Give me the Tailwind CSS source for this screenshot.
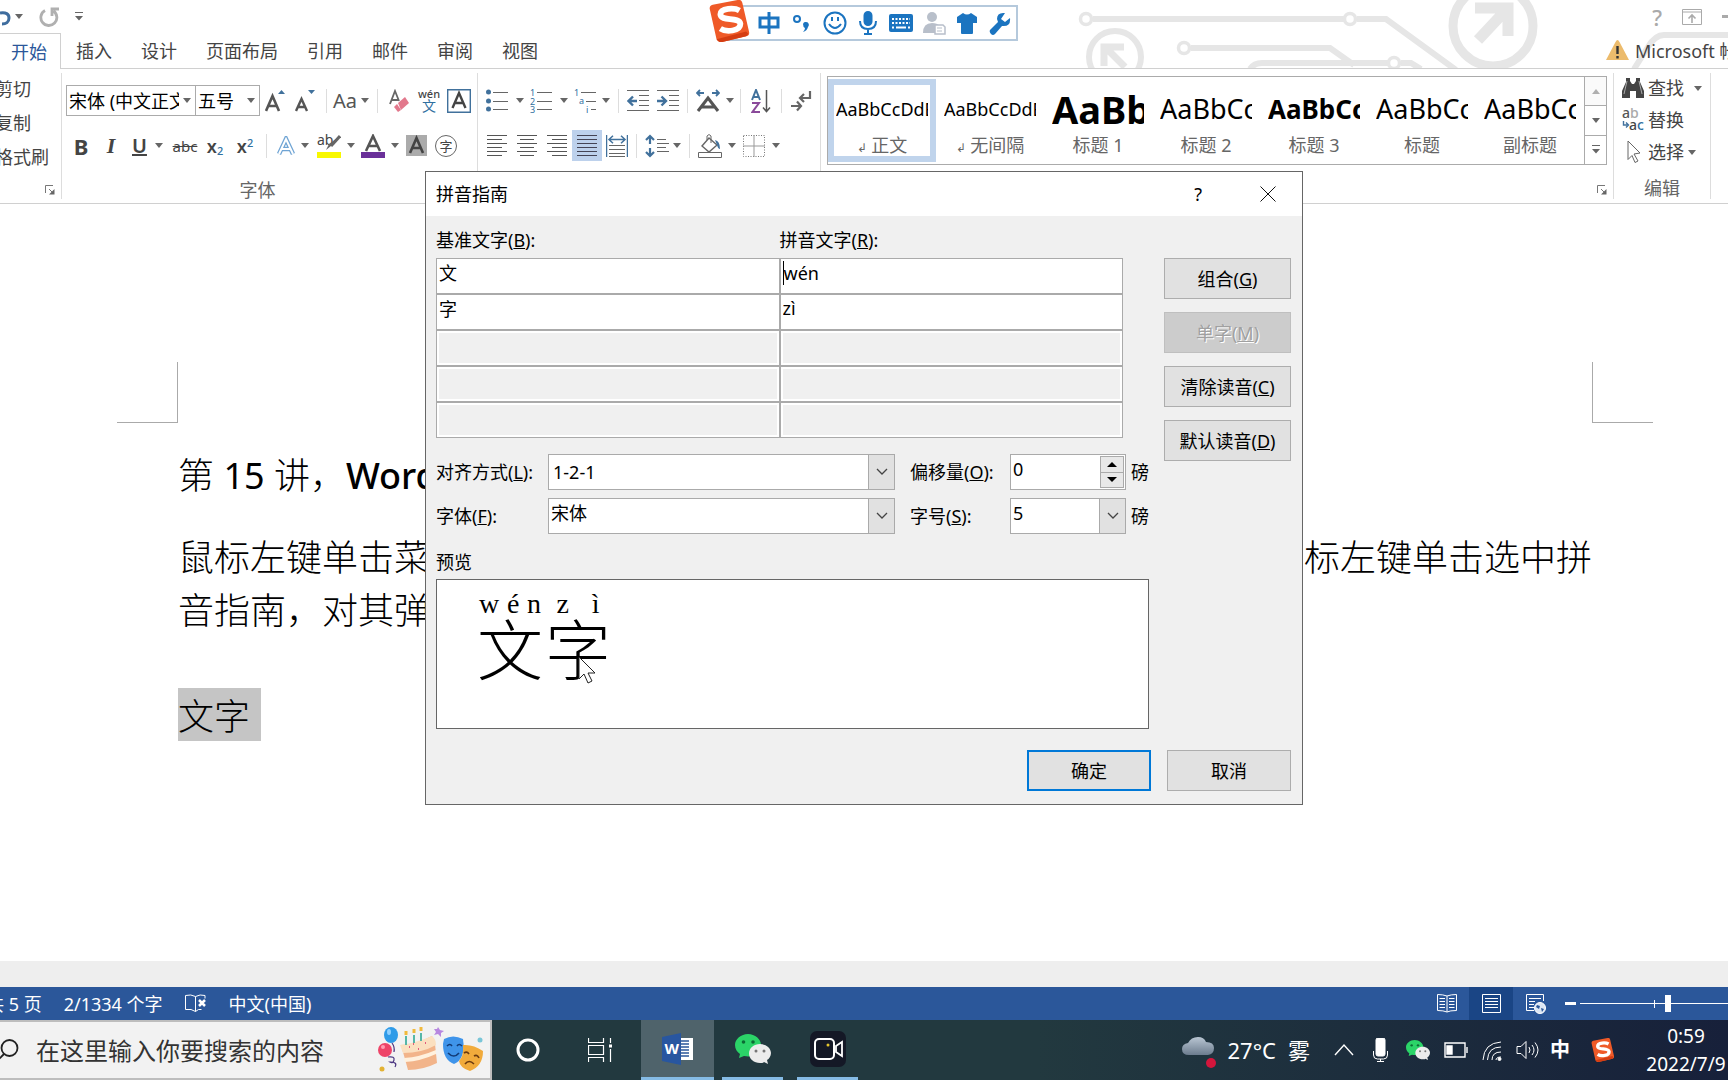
<!DOCTYPE html>
<html lang="zh-CN">
<head>
    <meta charset="UTF-8">
    <meta name="viewport" content="width=device-width, initial-scale=1.0">
    <title>Word - 拼音指南</title>
    <script src="https://cdn.jsdelivr.net/npm/@tailwindcss/browser@4"></script>
</head>
<body class="relative flex flex-col h-screen overflow-hidden bg-white text-[18px] leading-6 text-[#444] font-['Noto_Sans','Noto_Sans_CJK_SC',sans-serif]">

<!-- Shared icon symbols -->
<svg class="hidden">
    <symbol id="caret" viewBox="0 0 8 5"><path d="M0 0h8L4 5z" fill="#666"/></symbol>
    <symbol id="launcher" viewBox="0 0 10 10"><path d="M.5 8V.5H8M4 4l3 3" fill="none" stroke="#777"/><path d="M9.5 4v5.500H4z" fill="#666"/></symbol>
    <symbol id="chevron" viewBox="0 0 12 8"><path d="M1 1l5 5 5-5" fill="none" stroke="#444" stroke-width="1.300"/></symbol>
    <symbol id="wechat" viewBox="0 0 36 32">
        <path d="M13 1C6 1 0 6 0 12c0 4 2 7 5 9l-1 4 5-2c10 2 17-3 17-11C26 6 20 1 13 1z" fill="#2bd468"/>
        <circle cx="8.500" cy="9" r="1.800" fill="#0c6b35"/><circle cx="18" cy="9" r="1.800" fill="#0c6b35"/>
        <path d="M25 11c-6 0-11 4-11 9.500S19 30 25 30c2 0 3 0 4-1l4 2-1-4c2-1 4-4 4-7 0-5-5-9-11-9z" fill="#ececec"/>
        <circle cx="21" cy="18" r="1.500" fill="#777"/><circle cx="29" cy="18" r="1.500" fill="#777"/>
    </symbol>
    <symbol id="sogou" viewBox="0 0 44 44">
        <path d="M3 10Q2 6 6 5L32 0q4-1 5 3l7 30q1 4-3 5l-25 6q-4 1-6-3z" fill="#ef5a28"/>
        <path d="M10 41l31-8 2 2q0 2-2 3l-25 6q-4 0-6-3z" fill="#d43d12"/>
        <path d="M34 11c-5-3-20-3-20 4 0 8 20 2 21 10 0 8-15 9-21 5" fill="none" stroke="#fff" stroke-width="6"/>
    </symbol>
</svg>

<!-- Title bar and tabs -->
<header class="relative shrink-0">
    <svg class="absolute right-0 top-0 w-[668px] h-[69px]" viewBox="0 0 668 69" fill="none" stroke="#e6e6e6" stroke-width="6">
        <circle cx="26" cy="19" r="5.500" stroke-width="3.500"/><path d="M33 19h251M297 19h29l70 51"/>
        <circle cx="290" cy="19" r="5.500" stroke-width="3.500"/>
        <circle cx="124" cy="48" r="5.500" stroke-width="3.500"/><path d="M131 48h139l24 17M190 69q4-6 12-6h126M341 63h10l10 6"/>
        <circle cx="334" cy="63" r="5.500" stroke-width="3.500"/>
        <circle cx="55" cy="57" r="26"/><path d="M44 66V47h20M45 47l20 20" stroke-width="7"/>
        <circle cx="433" cy="26" r="40" stroke-width="9"/><path d="M415 8h33v28M447 9l-29 31" stroke-width="11"/>
        <path d="M574 69l14-22q7-12 16-12h64"/>
    </svg>

    <div class="relative flex justify-between h-[33px] items-center">
        <div class="flex items-center gap-4">
            <button class="flex items-center gap-1" aria-label="撤消">
                <svg class="w-[11px] h-5" viewBox="0 0 11 20"><path d="M0 6c6-1 9 1 9 5s-3 6-7 6" fill="none" stroke="#3f6d9e" stroke-width="3"/></svg>
                <svg class="w-2 h-[5px]"><use href="#caret"/></svg>
            </button>
            <button class="flex" aria-label="重复">
                <svg class="w-5 h-5" viewBox="0 0 20 20"><path d="M6 3.500A8 8 0 1 0 14.500 4M13 9V2h7" fill="none" stroke="#b0b0b0" stroke-width="2.800"/></svg>
            </button>
            <button class="flex" aria-label="自定义快速访问工具栏">
                <svg class="w-2 h-[9px]" viewBox="0 0 8 9"><path d="M0 0h8v1H0zM0 4h8L4 8.500z" fill="#666"/></svg>
            </button>
        </div>
        <div class="flex items-center gap-5 text-[#aaa]">
            <button class="text-[22px] font-medium" aria-label="帮助">?</button>
            <button aria-label="功能区显示选项">
                <svg class="w-5 h-4" viewBox="0 0 20 16" fill="none" stroke="#aaa"><path d="M.5.500h19v15H.5zM.5 3h19"/><path d="M10 14V6M6.500 9.500L10 6l3.500 3.500" stroke-width="1.600"/></svg>
            </button>
            <button class="w-1.5 h-[3px] bg-[#aaa]" aria-label="最小化"></button>
        </div>
    </div>

    <div class="relative flex h-9 items-stretch">
        <a href="#" class="flex items-center w-[61px] pl-[11px] border-t border-r border-[#d0d0d0] bg-white text-[#2b579a]">开始</a>
        <nav class="flex flex-1 items-center gap-[29px] pl-[15px] border-b border-[#d0d0d0]">
            <a href="#">插入</a>
            <a href="#">设计</a>
            <a href="#">页面布局</a>
            <a href="#">引用</a>
            <a href="#">邮件</a>
            <a href="#">审阅</a>
            <a href="#">视图</a>
            <a href="#" class="flex items-center gap-1.5 w-[122px] ml-auto overflow-hidden whitespace-nowrap">
                <svg class="w-[23px] h-[21px] shrink-0" viewBox="0 0 23 21"><path d="M11.500 0q1 0 2 2L23 20H0L9.500 2q1-2 2-2z" fill="#ecbb6c"/><path d="M11.500 6v8M11.500 16v2.500" stroke="#333" stroke-width="2.400"/></svg>
                Microsoft 帐户
            </a>
        </nav>
    </div>
</header>

<!-- Ribbon -->
<section class="flex shrink-0 h-[135px] py-1 border-b border-[#d0d0d0]">
    <!-- Clipboard -->
    <div class="flex flex-col w-[62px] border-r border-[#ddd] overflow-hidden">
        <div class="flex flex-col gap-2.5 pt-1 -ml-[5px] whitespace-nowrap items-start">
            <button>剪切</button>
            <button>复制</button>
            <button>格式刷</button>
        </div>
        <button class="mt-auto mb-1 mr-1.5 self-end" aria-label="剪贴板选项"><svg class="w-2.5 h-2.5"><use href="#launcher"/></svg></button>
    </div>

    <!-- Font -->
    <div class="flex flex-col w-[416px] pt-3 pl-1 border-r border-[#ddd]">
        <div class="flex shrink-0 items-center h-[31px]">
            <button class="flex items-center justify-between w-[130px] h-[31px] pl-0.5 pr-1 border border-[#ababab] text-black" aria-label="字体名称">
                <span class="w-[110px] overflow-hidden whitespace-nowrap text-left">宋体 (中文正文)</span>
                <svg class="w-2 h-[5px]"><use href="#caret"/></svg>
            </button>
            <button class="flex items-center justify-between w-[65px] h-[31px] -ml-px pl-0.5 pr-1 border border-[#ababab] text-black" aria-label="字号">
                五号
                <svg class="w-2 h-[5px]"><use href="#caret"/></svg>
            </button>
            <button class="flex justify-center w-[30px]" aria-label="增大字号">
                <svg class="w-5 h-6" viewBox="0 0 20 24"><path d="M1 22L7.500 7 14 22M3.500 17h8" fill="none" stroke="#555" stroke-width="2.600"/><path d="M13 5h7l-3.500-4z" fill="#41719c"/></svg>
            </button>
            <button class="flex justify-center w-[30px]" aria-label="减小字号">
                <svg class="w-5 h-6" viewBox="0 0 20 24"><path d="M1 22L6.500 10 12 22M3 18h7" fill="none" stroke="#555" stroke-width="2.400"/><path d="M13 1h7l-3.500 4z" fill="#41719c"/></svg>
            </button>
            <span class="w-px h-6 mx-1.5 bg-[#ddd]"></span>
            <button class="flex items-center gap-1 w-[38px] text-[20px] text-[#555]">Aa<svg class="w-2 h-[5px] shrink-0"><use href="#caret"/></svg></button>
            <span class="w-px h-6 mx-1.5 bg-[#ddd]"></span>
            <button class="flex justify-center w-[30px]" aria-label="清除格式">
                <svg class="w-5 h-6" viewBox="0 0 20 24"><path d="M1 15L6 2l4 10M3 11h6" fill="none" stroke="#666" stroke-width="1.800"/><path d="M9 14l7-6 4 6-8 7z" fill="#e2788c"/><path d="M8 15l4 6-3 2-4-5z" fill="#e2788c"/></svg>
            </button>
            <button class="flex flex-col items-center w-[30px]" aria-label="拼音指南">
                <span class="text-[11px] leading-[11px] font-medium">wén</span>
                <span class="text-[14px] leading-[14px] text-[#2f6f9f]">文</span>
            </button>
            <button class="flex justify-center w-[30px]" aria-label="字符边框">
                <svg class="w-6 h-6" viewBox="0 0 24 24" fill="none"><path d="M.7.700h22.600v22.600H.7z" stroke="#41719c" stroke-width="1.400"/><path d="M5.500 19L12 4l6.500 15M8 14h8" stroke="#444" stroke-width="2.400"/></svg>
            </button>
        </div>
        <div class="flex shrink-0 items-center h-[31px] mt-3.5">
            <button class="w-[30px] text-[22px] font-bold">B</button>
            <button class="w-[30px] text-[22px] font-bold italic font-['Liberation_Serif',serif]">I</button>
            <button class="flex items-center gap-2 w-11 pl-1.5 text-[20px] font-semibold"><u>U</u><svg class="w-2 h-[5px]"><use href="#caret"/></svg></button>
            <button class="w-[30px] text-[15px] line-through">abc</button>
            <button class="w-[30px] text-[18px] font-semibold whitespace-nowrap">x<sub class="text-[11px] font-medium text-[#2f6f9f]">2</sub></button>
            <button class="w-[30px] text-[18px] font-semibold whitespace-nowrap">x<sup class="text-[11px] font-medium text-[#2f6f9f]">2</sup></button>
            <span class="w-px h-6 mx-1.5 bg-[#ddd]"></span>
            <button class="flex items-center gap-1.5 w-10 pl-1" aria-label="文本效果">
                <svg class="w-[18px] h-5" viewBox="0 0 18 20" fill="none"><path d="M2 18L9 3l7 15M5 13h8" stroke="#6fa4d4" stroke-width="4.500"/><path d="M2 18L9 3l7 15M5 13h8" stroke="#fff" stroke-width="2"/></svg>
                <svg class="w-2 h-[5px]"><use href="#caret"/></svg>
            </button>
            <button class="flex items-center gap-1.5 w-11 pl-1" aria-label="突出显示">
                <svg class="w-6 h-6" viewBox="0 0 24 24"><text x="0" y="11" font-size="14" fill="#444">ab</text><path d="M23 2L14 12l-5 4 3-6z" fill="#666"/><path d="M23 2l-9 10" stroke="#666" stroke-width="3"/><path d="M0 18h24v6H0z" fill="#f8f800"/></svg>
                <svg class="w-2 h-[5px]"><use href="#caret"/></svg>
            </button>
            <button class="flex items-center gap-1.5 w-11 pl-1" aria-label="字体颜色">
                <svg class="w-6 h-6" viewBox="0 0 24 24"><path d="M5 17l7-15 7 15M8 12h8" fill="none" stroke="#555" stroke-width="2.600"/><path d="M0 18h24v6H0z" fill="#6a3099"/></svg>
                <svg class="w-2 h-[5px]"><use href="#caret"/></svg>
            </button>
            <button class="flex justify-center w-[30px]" aria-label="字符底纹">
                <svg class="w-[21px] h-[21px]" viewBox="0 0 21 21"><path d="M0 0h21v21H0z" fill="#ababab"/><path d="M4 18l6.500-15L17 18M6.500 13h8" fill="none" stroke="#444" stroke-width="2.600"/></svg>
            </button>
            <button class="flex justify-center w-[30px]" aria-label="带圈字符">
                <span class="flex items-center justify-center w-[22px] h-[22px] rounded-full border border-[#666] text-[13px]">字</span>
            </button>
        </div>
        <div class="mt-[17px] pr-7 text-center text-[#666]">字体</div>
    </div>

    <!-- Paragraph -->
    <div class="flex flex-col w-[343px] pt-3 pl-1 border-r border-[#ddd]">
        <div class="flex shrink-0 items-center h-[31px]">
            <button class="flex items-center gap-1.5 w-11 pl-1" aria-label="项目符号">
                <svg class="w-6 h-6" viewBox="0 0 24 24"><g fill="#41719c"><circle cx="2.500" cy="3" r="2.500"/><circle cx="2.500" cy="12" r="2.500"/><circle cx="2.500" cy="20" r="2.500"/></g><path d="M7 3.500h15M7 12.500h15M7 20.500h15" stroke="#666"/></svg>
                <svg class="w-2 h-[5px]"><use href="#caret"/></svg>
            </button>
            <button class="flex items-center gap-1.5 w-11 pl-1" aria-label="编号">
                <svg class="w-6 h-6" viewBox="0 0 24 24"><g font-size="9" fill="#2f6f9f"><text x="0" y="7">1</text><text x="0" y="15.500">2</text><text x="0" y="24">3</text></g><path d="M7 3.500h15M7 12.500h15M7 20.500h15" stroke="#666"/></svg>
                <svg class="w-2 h-[5px]"><use href="#caret"/></svg>
            </button>
            <button class="flex items-center gap-1 w-11 pl-1" aria-label="多级列表">
                <svg class="w-6 h-6" viewBox="0 0 24 24"><g font-size="9" fill="#2f6f9f"><text x="0" y="7">1</text><text x="5" y="15">a</text><text x="12" y="24">i</text></g><path d="M7 3.500h15M12 12.500h10M17 20.500h5" stroke="#666"/></svg>
                <svg class="w-2 h-[5px]"><use href="#caret"/></svg>
            </button>
            <span class="w-px h-6 mx-1 bg-[#ddd]"></span>
            <button class="flex justify-center w-[30px]" aria-label="减少缩进量">
                <svg class="w-[22px] h-[22px]" viewBox="0 0 22 22"><path d="M0 .5h22M12 5.500h10M12 10.500h10M12 15.500h10M0 20.500h22" stroke="#666"/><path d="M10 11H2M6 6.500L1.500 11 6 15.500" fill="none" stroke="#41719c" stroke-width="2.400"/></svg>
            </button>
            <button class="flex justify-center w-[30px]" aria-label="增加缩进量">
                <svg class="w-[22px] h-[22px]" viewBox="0 0 22 22"><path d="M0 .5h22M12 5.500h10M12 10.500h10M12 15.500h10M0 20.500h22" stroke="#666"/><path d="M0 11h8M4.500 6.500L9 11l-4.500 4.500" fill="none" stroke="#41719c" stroke-width="2.400"/></svg>
            </button>
            <span class="w-px h-6 mx-1 bg-[#ddd]"></span>
            <button class="flex items-center gap-1.5 w-11 pl-1" aria-label="中文版式">
                <svg class="w-6 h-6" viewBox="0 0 24 24" fill="none"><path d="M2 22L12 9l10 13M6 18h12" stroke="#555" stroke-width="3"/><path d="M1 4h7M16 4h7M4 1L1 4l3 3M20 1l3 3-3 3" stroke="#41719c" stroke-width="1.800"/></svg>
                <svg class="w-2 h-[5px]"><use href="#caret"/></svg>
            </button>
            <span class="w-px h-6 mx-1 bg-[#ddd]"></span>
            <button class="flex justify-center w-8" aria-label="排序">
                <svg class="w-5 h-6" viewBox="0 0 20 24" fill="none"><path d="M1 11L5 1l4 10M2 8h6" stroke="#41719c" stroke-width="2"/><path d="M1 14h7L1.500 23H9" stroke="#8a4a9a" stroke-width="2"/><path d="M15.500 1v21M12 18.500l3.500 4 3.500-4" stroke="#555" stroke-width="1.500"/></svg>
            </button>
            <span class="w-px h-6 mx-1 bg-[#ddd]"></span>
            <button class="flex justify-center w-[30px]" aria-label="显示编辑标记">
                <svg class="w-[22px] h-[22px]" viewBox="0 0 22 22" fill="none" stroke="#666" stroke-width="2.200"><path d="M20 1v7h-9M14 4l-4 4 4 4M1 16h9M7 11.500l4 4.500-4 4.500"/></svg>
            </button>
        </div>
        <div class="flex shrink-0 items-center h-[31px] mt-3.5">
            <button class="flex justify-center w-[30px]" aria-label="左对齐">
                <svg class="w-5 h-[22px]" viewBox="0 0 20 22"><path d="M0 .5h20M0 4.500h15M0 8.500h20M0 12.500h15M0 16.500h20M0 20.500h15" stroke="#555"/></svg>
            </button>
            <button class="flex justify-center w-[30px]" aria-label="居中">
                <svg class="w-5 h-[22px]" viewBox="0 0 20 22"><path d="M0 .5h20M3 4.500h14M0 8.500h20M3 12.500h14M0 16.500h20M3 20.500h14" stroke="#555"/></svg>
            </button>
            <button class="flex justify-center w-[30px]" aria-label="右对齐">
                <svg class="w-5 h-[22px]" viewBox="0 0 20 22"><path d="M0 .5h20M5 4.500h15M0 8.500h20M5 12.500h15M0 16.500h20M5 20.500h15" stroke="#555"/></svg>
            </button>
            <button class="flex justify-center items-center w-[30px] h-[31px] bg-[#bdd1ec]" aria-label="两端对齐">
                <svg class="w-5 h-[22px]" viewBox="0 0 20 22"><path d="M0 .5h20M0 4.500h20M0 8.500h20M0 12.500h20M0 16.500h20M0 20.500h20" stroke="#445"/></svg>
            </button>
            <button class="flex justify-center w-[30px]" aria-label="分散对齐">
                <svg class="w-[22px] h-[22px]" viewBox="0 0 22 22" fill="none"><path d="M.5 0v22M21.500 0v22M3 4.500h16M7 .8L3 4.500l4 3.700M15 .8l4 3.700-4 3.700" stroke="#41719c" stroke-width="1.500"/><path d="M3 10.500h16M3 14.500h16M3 18.500h16M3 21.500h16" stroke="#666"/></svg>
            </button>
            <span class="w-px h-6 mx-1 bg-[#ddd]"></span>
            <button class="flex items-center gap-1 w-11 pl-1" aria-label="行距">
                <svg class="w-6 h-6" viewBox="0 0 24 24" fill="none"><path d="M5 2v8M5 14v8M1 6l4-4 4 4M1 18l4 4 4-4" stroke="#41719c" stroke-width="2.200"/><path d="M12 5.500h9M12 9.500h12M12 13.500h9M12 17.500h12" stroke="#666"/></svg>
                <svg class="w-2 h-[5px]"><use href="#caret"/></svg>
            </button>
            <span class="w-px h-6 mx-1 bg-[#ddd]"></span>
            <button class="flex items-center gap-1.5 w-11 pl-1" aria-label="底纹">
                <svg class="w-6 h-6" viewBox="0 0 24 24" fill="none" stroke="#666"><path d="M.5 18.500h23v5H.5z"/><path d="M11 4l8 7-8 7-7-6z" stroke-width="1.400"/><path d="M9 6V2q2-3 4 0v7"/><path d="M17 6q5 1 5 9-2 0-3-4z" fill="#41719c" stroke="none"/></svg>
                <svg class="w-2 h-[5px]"><use href="#caret"/></svg>
            </button>
            <button class="flex items-center gap-1.5 w-11 pl-1" aria-label="边框">
                <svg class="w-6 h-6" viewBox="0 0 24 24" fill="none" stroke="#777" stroke-dasharray="1 1.500"><path d="M1.500 1.500h21v21h-21z"/><path d="M12 1v22M1 12h22" stroke="#999" stroke-dasharray="none"/></svg>
                <svg class="w-2 h-[5px]"><use href="#caret"/></svg>
            </button>
        </div>
        <div class="mt-[17px] text-center text-[#666]">段落</div>
    </div>

    <!-- Styles -->
    <div class="flex flex-col flex-1 min-w-0 pt-[3px] px-1.5 border-r border-[#ddd]">
        <div class="grid grid-cols-[repeat(7,minmax(0,1fr))_22px] h-[89px] border border-[#ababab]">
            <button class="flex flex-col items-center my-0.5 border-6 border-[#c0d4ec] overflow-hidden whitespace-nowrap">
                <span class="flex items-center h-12 w-[92px] shrink-0 text-black overflow-hidden">AaBbCcDdEe</span>
                <span class="text-[#666]"><small class="text-[12px] leading-none">↲</small> 正文</span>
            </button>
            <button class="flex flex-col items-center py-2 overflow-hidden whitespace-nowrap">
                <span class="flex items-center h-12 w-[92px] shrink-0 text-black overflow-hidden">AaBbCcDdEe</span>
                <span class="text-[#666]"><small class="text-[12px] leading-none">↲</small> 无间隔</span>
            </button>
            <button class="flex flex-col items-center py-2 overflow-hidden whitespace-nowrap">
                <span class="flex items-center h-12 w-[92px] shrink-0 text-black overflow-hidden text-[38px] font-bold">AaBbCc</span>
                <span class="text-[#666]">标题 1</span>
            </button>
            <button class="flex flex-col items-center py-2 overflow-hidden whitespace-nowrap">
                <span class="flex items-center h-12 w-[92px] shrink-0 text-black overflow-hidden text-[27px]">AaBbCc</span>
                <span class="text-[#666]">标题 2</span>
            </button>
            <button class="flex flex-col items-center py-2 overflow-hidden whitespace-nowrap">
                <span class="flex items-center h-12 w-[92px] shrink-0 text-black overflow-hidden text-[26px] font-bold">AaBbCc</span>
                <span class="text-[#666]">标题 3</span>
            </button>
            <button class="flex flex-col items-center py-2 overflow-hidden whitespace-nowrap">
                <span class="flex items-center h-12 w-[92px] shrink-0 text-black overflow-hidden text-[27px]">AaBbCc</span>
                <span class="text-[#666]">标题</span>
            </button>
            <button class="flex flex-col items-center py-2 overflow-hidden whitespace-nowrap">
                <span class="flex items-center h-12 w-[92px] shrink-0 text-black overflow-hidden text-[27px]">AaBbCc</span>
                <span class="text-[#666]">副标题</span>
            </button>
            <div class="flex flex-col border-l border-[#ababab] divide-y divide-[#ababab]">
                <button class="flex flex-1 items-center justify-center bg-[#fafafa]" aria-label="上一行"><svg class="w-2 h-[5px] rotate-180 opacity-50"><use href="#caret"/></svg></button>
                <button class="flex flex-1 items-center justify-center" aria-label="下一行"><svg class="w-2 h-[5px]"><use href="#caret"/></svg></button>
                <button class="flex flex-1 items-center justify-center" aria-label="其他"><svg class="w-2 h-[9px]" viewBox="0 0 8 9"><path d="M0 0h8v1H0zM0 4h8L4 8.500z" fill="#666"/></svg></button>
            </div>
        </div>
        <div class="flex items-center justify-end mt-auto pb-1">
            <button aria-label="样式选项"><svg class="block w-2.5 h-2.5"><use href="#launcher"/></svg></button>
        </div>
    </div>

    <!-- Editing -->
    <div class="flex flex-col w-[97px] mr-[17px] pl-2 border-r border-[#ddd] whitespace-nowrap">
        <div class="flex flex-col gap-2 pt-[3px]">
            <button class="flex items-center gap-1">
                <svg class="w-[22px] h-5" viewBox="0 0 22 20" fill="#444"><path d="M4 0h4v3l2 3h2l2-3V0h4v4l4 9v7h-8v-7h-6v7H0v-7l4-9z"/><path d="M5 3L2 16M17 3l3 13" stroke="#aaa"/></svg>
                查找 <svg class="w-2 h-[5px] ml-1.5"><use href="#caret"/></svg>
            </button>
            <button class="flex items-center gap-1">
                <svg class="w-[22px] h-6" viewBox="0 0 22 24"><g font-size="14" font-weight="500"><text x="0" y="10" fill="#555">a</text><text x="8" y="10" fill="#aaa">b</text><text x="7" y="22" fill="#444">a</text><text x="15" y="22" fill="#2f6f9f">c</text></g><path d="M1.500 13v4h4M4 14.500L6.500 17 4 19.500" fill="none" stroke="#41719c" stroke-width="1.400"/></svg>
                替换
            </button>
            <button class="flex items-center gap-1">
                <svg class="w-[22px] h-6" viewBox="0 0 22 24" fill="#fff" stroke="#666"><path d="M6 1l12 12-6 1 4 7-3 1.500-3-7-4 4z"/></svg>
                选择<svg class="w-2 h-[5px]"><use href="#caret"/></svg>
            </button>
        </div>
        <div class="mt-3 pr-2 text-center text-[#666]">编辑</div>
    </div>
</section>

<!-- Document -->
<main class="flex-1 min-h-0 pl-[117px] pr-[75px] pt-[158px] text-black overflow-hidden font-['Noto_Sans_CJK_SC',sans-serif] text-[36px] leading-[53px] font-light">
    <div class="flex justify-between">
        <div class="w-[61px] h-[61px] border-r border-b border-[#aaa]"></div>
        <div class="w-[61px] h-[61px] border-l border-b border-[#aaa]"></div>
    </div>
    <div class="mx-[61px] pt-[26px] whitespace-nowrap">
        <p class="mb-[27px] font-['Noto_Sans','Noto_Sans_CJK_SC',sans-serif]">第 <span class="font-normal">15</span> 讲，<span class="font-medium">Word</span></p>
        <p class="flex justify-between"><span>鼠标左键单击菜</span><span>标左键单击选中拼</span></p>
        <p>音指南，对其弹</p>
        <p class="mt-[53px]"><span class="inline-block h-[53px] pr-[11px] bg-[#c5c5c5]">文字</span></p>
    </div>
</main>
<div class="shrink-0 h-[26px] bg-[#eee]"></div>

<!-- Status bar -->
<footer class="flex shrink-0 items-center h-[33px] bg-[#2b579a] text-white whitespace-nowrap overflow-hidden">
    <div class="flex items-center gap-[22px] -ml-3.5">
        <span>共 5 页</span>
        <span>2/1334 个字</span>
        <svg class="w-[22px] h-5" viewBox="0 0 22 20" fill="none" stroke="#fff"><path d="M10.500 2.500Q6 0 .5 1.500v14q6-1 10 2 3-3 6-2M10.500 2.500v15M10.500 2.500Q15 0 20 1.500v3"/><path d="M14 6l6 6M20 6l-6 6" stroke-width="2.500"/></svg>
        <span>中文(中国)</span>
    </div>
    <div class="flex items-center h-full ml-auto">
        <button class="flex justify-center w-11" aria-label="阅读视图">
            <svg class="w-5 h-[19px]" viewBox="0 0 20 19" fill="none" stroke="#fff"><path d="M10 2Q6 .5.500.500v16q6 0 9.500 1.500 3-1.500 9.500-1.500V.5Q14 .5 10 2zv16M2.500 4.500H8M2.500 7.500H8M2.500 10.500H8M2.500 13.500H8M12 4.500h5.500M12 7.500h5.500M12 10.500h5.500M12 13.500h5.500"/></svg>
        </button>
        <button class="flex justify-center items-center w-11 h-full bg-[#1a4585]" aria-label="页面视图">
            <svg class="w-[19px] h-[19px]" viewBox="0 0 19 19" fill="none" stroke="#fff"><path d="M.5.500h18v18H.5zM3 4.500h13M3 7.500h13M3 10.500h13M3 13.500h13"/></svg>
        </button>
        <button class="flex justify-center w-[46px]" aria-label="Web 版式视图">
            <svg class="w-5 h-5" viewBox="0 0 20 20" fill="none" stroke="#fff"><path d="M8 16.500H.5V.5h17V7M3 4.500h12M3 7.500h6M3 10.500h5M3 13.500h5"/><circle cx="14" cy="14" r="5.500" fill="#dce6f4"/><path d="M11 11l3 1-1 3-3-2zM15 14l3 1-2 3z" fill="#2b579a" stroke="none"/></svg>
        </button>
        <button class="w-[11px] h-[3px] ml-1.5 mr-1 bg-white" aria-label="缩小"></button>
        <div class="relative flex items-center w-[148px]">
            <span class="absolute left-1/2 w-px h-2 bg-white"></span>
            <input type="range" value="60" aria-label="显示比例" class="w-full h-px appearance-none bg-white [&::-webkit-slider-thumb]:appearance-none [&::-webkit-slider-thumb]:w-1.5 [&::-webkit-slider-thumb]:h-[17px] [&::-webkit-slider-thumb]:bg-white">
        </div>
    </div>
</footer>

<!-- Taskbar -->
<section class="flex shrink-0 h-[60px] bg-linear-to-r from-[#22393f] from-60% to-[#17203a] text-white whitespace-nowrap overflow-hidden">
    <label class="flex items-center w-[492px] h-full pr-1.5 border-y-2 border-r-2 border-[#bdbdbd] bg-[#f2f2f2]">
        <svg class="w-5 h-6 shrink-0" viewBox="0 0 20 24" fill="none" stroke="#222" stroke-width="1.800"><circle cx="9.500" cy="10" r="8"/><path d="M4 16l-6 6"/></svg>
        <input type="text" placeholder="在这里输入你要搜索的内容" aria-label="搜索" class="flex-1 min-w-0 pl-4 text-[24px] placeholder:text-[#333] outline-none">
        <svg class="w-[106px] h-[46px] shrink-0" viewBox="0 0 106 46">
            <ellipse cx="13" cy="8" rx="7" ry="8" fill="#2f9be8"/><ellipse cx="7" cy="23" rx="7" ry="7" fill="#ee4468"/>
            <ellipse cx="11" cy="5" rx="2" ry="3" fill="#8fd0ff"/><ellipse cx="5" cy="20" rx="2" ry="2" fill="#ff9db2"/>
            <path d="M14 16q3 4 2 9M10 30q7-1 6 3t-4 2q8 0 5 5" fill="none" stroke="#4a3580" stroke-width="1.200"/>
            <circle cx="4" cy="42" r="2.500" fill="#e3b233"/>
            <path d="M23 18q14 0 31-9l3 8 2 19q-14 7-29 7l-5-18z" fill="#f2b48a"/><path d="M22 18q16-2 32-9 4 3 4 9-14 8-33 8z" fill="#fbe0c0"/><path d="M26 31q16-1 32-8v4q-15 7-31 8z" fill="#fff1de"/>
            <path d="M28 9v9M36 8v8M43 6v8" stroke="#56b7a8" stroke-width="2"/><path d="M28 4v4M36 2v4M43 0v4" stroke="#f1b93c" stroke-width="3"/>
            <path d="M31 20h1M40 22h1M47 16h1M35 17h1" stroke="#e05b7c" stroke-width="2"/>
            <path d="M60 0l2 3 4 1-3 2 0 4-3-3-4 1 2-3-2-3 3 0z" fill="#b787e0"/>
            <circle cx="102" cy="13" r="2.500" fill="#7ac6d8"/>
            <path d="M66 12q9-5 19 0 3 20-9 25-11-4-11-20z" fill="#3f94ea"/><path d="M69 19q3-3 5 0M79 19q2-3 5 0M70 26q6 6 11 0" fill="none" stroke="#123b77" stroke-width="1.600"/>
            <path d="M85 18q10-1 20 6 0 15-13 20-10-3-11-10 5-5 4-16z" fill="#f1ab3c"/><path d="M86 26q3-2 5 1M96 29q3-2 5 2M87 37q4-5 9 0" fill="none" stroke="#6a3a10" stroke-width="1.600"/>
        </svg>
    </label>
    <button class="flex items-center justify-center w-[72px]" aria-label="Cortana">
        <svg class="w-6 h-6" viewBox="0 0 24 24"><circle cx="12" cy="12" r="10" fill="none" stroke="#fff" stroke-width="3"/></svg>
    </button>
    <button class="flex items-center justify-center w-[77px] pr-1.5" aria-label="任务视图">
        <svg class="w-6 h-6" viewBox="0 0 24 24" fill="none" stroke="#fff"><path d="M.5 0v4.500h15V0M.5 24v-4.500h15V24M.5 7.500h15v9H.5zM22.500 0v5M22.500 11v13" stroke-width="1.200"/><path d="M21 6.500h3v3h-3z" fill="#fff" stroke="none"/></svg>
    </button>
    <button class="flex items-center justify-center w-[73px] border-b-3 border-[#85bbe5] bg-[#4f636b]" aria-label="Word">
        <svg class="w-8 h-8" viewBox="0 0 32 32"><path d="M18 5h13v22H18z" fill="#fff"/><path d="M19 8h8M19 11h8M19 14h8M19 17h8M19 20h8M19 23h8" stroke="#2b579a" stroke-width="1.500"/><path d="M0 4l19-4v32L0 28z" fill="#2856a0"/><text x="2.500" y="21" font-size="15" font-weight="700" fill="#fff">W</text></svg>
    </button>
    <button class="flex items-center justify-center w-[61px] ml-2 border-b-3 border-[#85bbe5]" aria-label="微信"><svg class="w-9 h-8"><use href="#wechat"/></svg></button>
    <button class="flex items-center justify-center w-[61px] ml-3.5 border-b-3 border-[#85bbe5]" aria-label="录屏">
        <svg class="w-9 h-9" viewBox="0 0 36 36" fill="none" stroke="#fff" stroke-width="2"><rect width="36" height="36" rx="7" fill="#141826" stroke="none"/><rect x="5" y="8" width="19" height="20" rx="4"/><path d="M26 15l6-4v14l-6-4z" stroke-width="1.800"/><circle cx="18" cy="14" r="1.500" fill="#e6c62c" stroke="none"/></svg>
    </button>

    <div class="flex items-center ml-auto">
        <svg class="w-9 h-9" viewBox="0 0 36 36"><defs><linearGradient id="cloud" x2="0" y2="1"><stop stop-color="#b9c6d3"/><stop offset="1" stop-color="#6c7c8e"/></linearGradient></defs><path d="M8 23q-7 0-7-6 0-5 6-6 3-6 10-6 6 0 8 5 8 0 8 6t-6 7z" fill="url(#cloud)"/><circle cx="30" cy="31" r="5" fill="#d4163c"/></svg>
        <span class="ml-2.5 text-[22px]">27°C</span>
        <span class="ml-3 text-[22px]">雾</span>
        <div class="flex items-center gap-[14px] ml-6">
            <svg class="w-5 h-6" viewBox="0 0 20 24" fill="none" stroke="#fff" stroke-width="1.400"><path d="M1 17l9-10 9 10"/></svg>
            <svg class="w-6 h-6" viewBox="0 0 24 24" fill="none" stroke="#fff"><rect x="8" y="0" width="9" height="18" rx="2" fill="#fff"/><path d="M5.500 13v4q0 4 4 4h6q4 0 4-4v-4M12.500 21v3M9 23.500h7"/></svg>
            <svg class="w-6 h-6"><use href="#wechat"/></svg>
            <svg class="w-6 h-4" viewBox="0 0 24 16" fill="none" stroke="#fff" stroke-width="1.400"><path d="M1 1h20v14H1zM23 5v6"/><path d="M3 4h5v8H3z" fill="#fff"/></svg>
            <svg class="w-5 h-6" viewBox="0 0 20 24" fill="none" stroke="#fff"><path d="M1 22Q2 5 19 4M5.500 22Q6 9 19 9M10 22q0-8 9-8M14 22q0-3 5-3"/><circle cx="17.500" cy="21" r="1.500" fill="#fff"/></svg>
            <svg class="w-6 h-6" viewBox="0 0 24 24" fill="none" stroke="#fff"><path d="M1 8.500h4l5-5v17l-5-5H1zM13 9q2 3 0 6M16 7q4 5 0 10M19 4.500q6 7.500 0 15"/></svg>
            <span class="-ml-1 text-[20px] font-bold">中</span>
        </div>
        <svg class="w-6 h-6 ml-5"><use href="#sogou"/></svg>
        <div class="flex flex-col items-center w-[84px] ml-[30px] text-[19px] leading-7">
            <time>0:59</time>
            <time>2022/7/9</time>
        </div>
    </div>
</section>

<!-- Input method bar -->
<div class="absolute left-[706px] top-0 flex items-center">
    <svg class="relative w-11 h-[42px] shrink-0"><use href="#sogou"/></svg>
    <div class="flex items-center gap-[9px] h-9 mt-1 -ml-6 pl-[29px] pr-1 border-2 border-[#b5c9dc] bg-white text-[#1b74c0]">
        <svg class="w-6 h-6" viewBox="0 0 24 24" fill="none" stroke="#1b74c0" stroke-width="3"><path d="M3 7h18v9H3zM12 1v22"/></svg>
        <svg class="w-6 h-6" viewBox="0 0 24 24"><circle cx="7" cy="8" r="3" fill="none" stroke="#1b74c0" stroke-width="2"/><path d="M13 13a3 3 0 1 1 5 3q-1 4-5 5 2-2 2-4-2-1-2-4z" fill="#1b74c0"/></svg>
        <svg class="w-6 h-6" viewBox="0 0 24 24" fill="none" stroke="#1b74c0" stroke-width="2"><circle cx="12" cy="12" r="10.500"/><path d="M9 6v4M15 6v4M6 13q6 8 12 0"/></svg>
        <svg class="w-6 h-6" viewBox="0 0 24 24" fill="none" stroke="#1b74c0" stroke-width="2"><rect x="8.500" y="1" width="7" height="13" rx="3.500" fill="#1b74c0"/><path d="M4 10q0 8 8 8t8-8M12 18v5M8 23h8"/></svg>
        <svg class="w-6 h-6" viewBox="0 0 24 24"><rect y="3" width="24" height="18" rx="2" fill="#1b74c0"/><path d="M3 8h18M3 12h18" stroke="#fff" stroke-width="2" stroke-dasharray="2 1.500"/><path d="M3 16.500h2M7 16.500h10M19 16.500h2" stroke="#fff" stroke-width="2"/></svg>
        <svg class="w-6 h-6" viewBox="0 0 24 24" fill="#b8bfca"><circle cx="10" cy="6" r="5"/><path d="M1 22q0-10 9-10 5 0 8 3v7z"/><path d="M13 14h8l2 2v7H13z" fill="#fff" stroke="#b8bfca" stroke-width="1.500"/><path d="M15 17h5M15 20h5" stroke="#b8bfca"/></svg>
        <svg class="w-6 h-6" viewBox="0 0 24 24" fill="#1b74c0"><path d="M8 2q4 3 8 0l6 4v6h-4v10q0 1-1 1H7q-1 0-1-1V12H2V6z"/></svg>
        <svg class="w-6 h-6" viewBox="0 0 24 24" fill="#1b74c0"><path d="M22 7l-5 4-4-3 4-6q-8-1-8 6l1 3-8 8q-1 2 1 4t4 0l7-8q9 1 8-8z"/></svg>
    </div>
</div>

<!-- Phonetic guide dialog -->
<div role="dialog" aria-label="拼音指南" class="absolute left-[425px] top-[171px] w-[878px] h-[634px] flex flex-col border border-[#666] bg-[#f0f0f0] text-black">
    <div class="flex items-center justify-between h-11 pl-2.5 pr-[26px] bg-white">
        <h1>拼音指南</h1>
        <div class="flex items-center gap-[58px]">
            <button aria-label="帮助">?</button>
            <button aria-label="关闭"><svg class="w-4 h-4" viewBox="0 0 16 16"><path d="M.5.500l15 15M15.500.500l-15 15" stroke="#111"/></svg></button>
        </div>
    </div>

    <form class="flex flex-col flex-1 pl-2.5 pr-[11px] pt-3">
        <div class="flex justify-between">
            <div class="w-[690px]">
                <div class="grid grid-cols-2 w-[687px]">
                    <label for="base-1" class="h-[30px]">基准文字(<u>B</u>):</label>
                    <label for="ruby-1">拼音文字(<u>R</u>):</label>
                    <input id="base-1" value="文" class="h-9 px-0.5 pb-2 min-w-0 border border-[#aaa] bg-white">
                    <div class="flex items-center h-9 pl-0.5 pb-1.5 border border-[#aaa] bg-white">
                        <span class="w-px h-6 bg-black"></span>
                        <input id="ruby-1" value="wén" class="flex-1 min-w-0">
                    </div>
                    <input aria-label="基准文字 2" value="字" class="h-9 px-0.5 pb-2 min-w-0 border border-[#aaa] bg-white">
                    <input aria-label="拼音文字 2" value="zì" class="h-9 px-0.5 pb-2 min-w-0 border border-[#aaa] bg-white">
                    <input aria-label="基准文字 3" disabled class="h-9 min-w-0 border border-[#aaa] inset-ring-2 inset-ring-white">
                    <input aria-label="拼音文字 3" disabled class="h-9 min-w-0 border border-[#aaa] inset-ring-2 inset-ring-white">
                    <input aria-label="基准文字 4" disabled class="h-9 min-w-0 border border-[#aaa] inset-ring-2 inset-ring-white">
                    <input aria-label="拼音文字 4" disabled class="h-9 min-w-0 border border-[#aaa] inset-ring-2 inset-ring-white">
                    <input aria-label="基准文字 5" disabled class="h-9 min-w-0 border border-[#aaa] inset-ring-2 inset-ring-white">
                    <input aria-label="拼音文字 5" disabled class="h-9 min-w-0 border border-[#aaa] inset-ring-2 inset-ring-white">
                </div>

                <div class="grid grid-cols-[112px_347px_115px_116px_auto] items-center gap-y-2 mt-4 whitespace-nowrap">
                    <label for="align">对齐方式(<u>L</u>):</label>
                    <div class="relative h-9">
                        <select id="align" class="w-full h-full pl-1 border border-[#aaa] bg-white appearance-none"><option>1-2-1</option></select>
                        <span class="absolute right-0 inset-y-0 flex items-center justify-center w-[27px] border border-[#aaa] bg-[#e1e1e1] pointer-events-none"><svg class="w-3 h-2"><use href="#chevron"/></svg></span>
                    </div>
                    <label for="offset" class="pl-[15px]">偏移量(<u>O</u>):</label>
                    <div class="flex h-9 border border-[#aaa] bg-white">
                        <input id="offset" value="0" class="flex-1 min-w-0 pl-0.5 pb-1.5">
                        <div class="flex flex-col w-6 m-px border border-[#aaa] bg-[#e8e8e8] divide-y divide-[#aaa]">
                            <button type="button" class="flex flex-1 items-center justify-center" aria-label="增加"><svg class="w-2.5 h-[5px]" viewBox="0 0 10 5"><path d="M0 5h10L5 0z"/></svg></button>
                            <button type="button" class="flex flex-1 items-center justify-center" aria-label="减少"><svg class="w-2.5 h-[5px]" viewBox="0 0 10 5"><path d="M0 0h10L5 5z"/></svg></button>
                        </div>
                    </div>
                    <span class="pl-[5px]">磅</span>

                    <label for="font">字体(<u>F</u>):</label>
                    <div class="relative h-9">
                        <select id="font" class="w-full h-full pl-0.5 pb-1.5 border border-[#aaa] bg-white appearance-none"><option>宋体</option></select>
                        <span class="absolute right-0 inset-y-0 flex items-center justify-center w-[27px] border border-[#aaa] bg-[#e1e1e1] pointer-events-none"><svg class="w-3 h-2"><use href="#chevron"/></svg></span>
                    </div>
                    <label for="size" class="pl-[15px]">字号(<u>S</u>):</label>
                    <div class="relative h-9">
                        <select id="size" class="w-full h-full pl-0.5 pb-1.5 border border-[#aaa] bg-white appearance-none"><option>5</option></select>
                        <span class="absolute right-0 inset-y-0 flex items-center justify-center w-[27px] border border-[#aaa] bg-[#e1e1e1] pointer-events-none"><svg class="w-3 h-2"><use href="#chevron"/></svg></span>
                    </div>
                    <span class="pl-[5px]">磅</span>
                </div>
            </div>

            <div class="flex flex-col gap-[13px] w-[127px] pt-[30px]">
                <button type="button" class="h-[41px] border border-[#adadad] bg-[#e1e1e1]">组合(<u>G</u>)</button>
                <button type="button" disabled class="h-[41px] border border-[#bfbfbf] bg-[#ccc] text-[#a0a0a0] text-shadow-[1px_1px_0_#fff]">单字(<u>M</u>)</button>
                <button type="button" class="h-[41px] border border-[#adadad] bg-[#e1e1e1]">清除读音(<u>C</u>)</button>
                <button type="button" class="h-[41px] border border-[#adadad] bg-[#e1e1e1]">默认读音(<u>D</u>)</button>
            </div>
        </div>

        <h2 class="mt-4">预览</h2>
        <div class="relative flex gap-0.5 w-[713px] h-[150px] mt-[5px] pl-10 pt-2 border border-[#666] bg-white">
            <div class="w-[66px]">
                <div class="flex justify-between px-0.5 text-[28px] leading-8 font-['Liberation_Serif',serif]"><span>w</span><span>é</span><span>n</span></div>
                <div class="text-[66px] leading-[58px] font-light">文</div>
            </div>
            <div class="w-[66px]">
                <div class="flex justify-around text-[28px] leading-8 font-['Liberation_Serif',serif]"><span>z</span><span>ì</span></div>
                <div class="text-[66px] leading-[58px] font-light">字</div>
            </div>
            <svg class="absolute left-[141px] top-[76px] w-[19px] h-7" viewBox="0 0 19 28"><path d="M1 1v22l5-5 4 9 4-2-4-8h7z" fill="#fff" stroke="#222"/></svg>
        </div>

        <div class="flex justify-end gap-4 mt-[21px]">
            <button type="submit" class="w-[124px] h-[41px] border-2 border-[#0078d7] bg-[#e1e1e1]">确定</button>
            <button type="button" class="w-[124px] h-[41px] border border-[#adadad] bg-[#e1e1e1]">取消</button>
        </div>
    </form>
</div>

</body>
</html>
